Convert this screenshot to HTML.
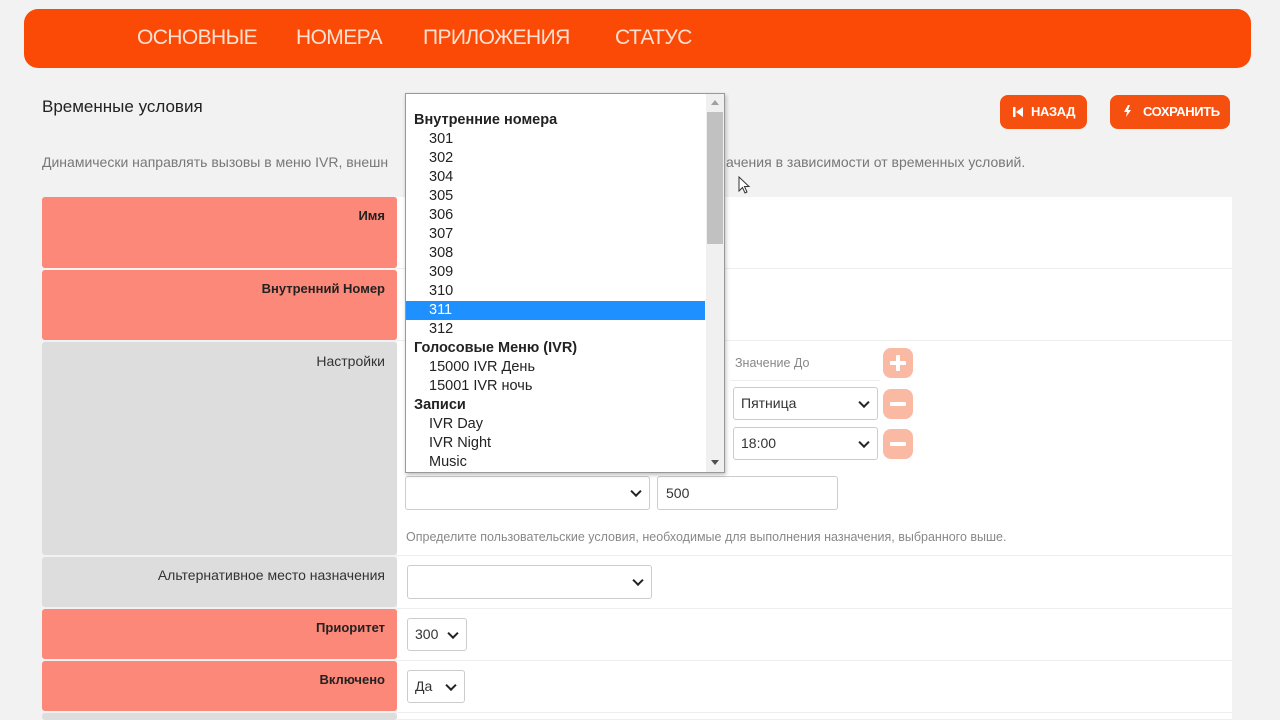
<!DOCTYPE html>
<html><head><meta charset="utf-8">
<style>
*{box-sizing:border-box;margin:0;padding:0}
html,body{width:1280px;height:720px;overflow:hidden}
body{background:#f2f2f2;font-family:"Liberation Sans",sans-serif;color:#333;position:relative}
.a{position:absolute}
.nav{left:24px;top:9px;width:1227px;height:59px;background:#fa4a06;border-radius:14px}
.nav span{position:absolute;top:17px;color:#ffe0d2;font-size:21px;letter-spacing:-0.6px}
.btn{background:#f5500f;border-radius:8px;color:#fff;font-weight:bold;font-size:13px;height:34px;line-height:34px;letter-spacing:-0.4px}
.lab{background:#fb8878;border-radius:3px;text-align:right;padding-right:12px;font-size:13px;font-weight:bold;color:#222;padding-top:12px}
.lab.g{background:#dddddd;font-weight:normal;color:#333;font-size:14px}
.row{background:#fff;border-bottom:1px solid #eee}
.sel,.inp{border:1px solid #ccc;border-radius:3px;background:#fff;font-size:14px;color:#333;padding-left:7px}
.sel:after{content:"";position:absolute;right:9px;top:50%;width:6px;height:6px;border-right:2px solid #222;border-bottom:2px solid #222;transform:translateY(-70%) rotate(45deg)}
.pm{width:30px;height:30px;border-radius:8px;background:#f9b9a3}
.pm:before{content:"";position:absolute;left:7px;top:13px;width:16px;height:4px;background:#fff;border-radius:1px}
.pm.p:after{content:"";position:absolute;left:13px;top:7px;width:4px;height:16px;background:#fff;border-radius:1px}
.dd{left:405px;top:93px;width:320px;height:380px;background:#fff;border:1px solid #999;box-shadow:1px 2px 4px rgba(0,0,0,.25);font-size:14.5px;color:#222;overflow:hidden}
.dd div{height:19px;line-height:19px;padding-left:23px;width:299px}
.dd div.h{padding-left:8px;font-weight:bold}
.dd div.s{background:#1e90ff;color:#fff}
</style></head><body>
<div class="a nav">
<span style="left:113px">ОСНОВНЫЕ</span>
<span style="left:272px">НОМЕРА</span>
<span style="left:399px">ПРИЛОЖЕНИЯ</span>
<span style="left:591px">СТАТУС</span>
</div>
<div class="a" style="left:42px;top:97px;font-size:17px;color:#222">Временные условия</div>
<div class="a btn" style="left:1000px;top:95px;width:87px;padding-left:13px"><svg width="10" height="10" style="vertical-align:-1px;margin-right:8px"><rect x="0" y="0" width="2.5" height="10" fill="#fff"/><path d="M10 0 L3 5 L10 10Z" fill="#fff"/></svg>НАЗАД</div>
<div class="a btn" style="left:1110px;top:95px;width:120px;padding-left:13px"><svg width="9" height="12" style="vertical-align:-1px;margin-right:11px"><path d="M5 0 L1 7 L4 7 L3 12 L8 5 L5 5 L7 0Z" fill="#fff"/></svg>СОХРАНИТЬ</div>
<div class="a" style="left:42px;top:154px;font-size:14px;color:#777;white-space:nowrap">Динамически направлять вызовы в меню IVR, внешн</div>
<div class="a" style="left:726px;top:154px;font-size:14px;color:#777;white-space:nowrap">ачения в зависимости от временных условий.</div>

<div class="a row" style="left:397px;top:197px;width:835px;height:72px"></div>
<div class="a row" style="left:397px;top:269px;width:835px;height:72px"></div>
<div class="a row" style="left:397px;top:341px;width:835px;height:215px"></div>
<div class="a row" style="left:397px;top:556px;width:835px;height:53px"></div>
<div class="a row" style="left:397px;top:609px;width:835px;height:52px"></div>
<div class="a row" style="left:397px;top:661px;width:835px;height:52px"></div>
<div class="a row" style="left:397px;top:713px;width:835px;height:7px"></div>

<div class="a lab" style="left:42px;top:197px;width:355px;height:71px;padding-top:11px">Имя</div>
<div class="a lab" style="left:42px;top:270px;width:355px;height:70px;padding-top:11px">Внутренний Номер</div>
<div class="a lab g" style="left:42px;top:342px;width:355px;height:213px;padding-top:11px">Настройки</div>
<div class="a lab g" style="left:42px;top:557px;width:355px;height:50px;padding-top:10px">Альтернативное место назначения</div>
<div class="a lab" style="left:42px;top:609px;width:355px;height:50px;padding-top:11px">Приоритет</div>
<div class="a lab" style="left:42px;top:661px;width:355px;height:50px;padding-top:11px">Включено</div>
<div class="a lab g" style="left:42px;top:713px;width:355px;height:7px;padding:0"></div>

<div class="a" style="left:735px;top:356px;font-size:12.5px;color:#888">Значение До</div>
<div class="a" style="left:730px;top:380px;width:150px;border-top:1px solid #eee"></div>
<div class="a pm p" style="left:883px;top:348px"></div>
<div class="a sel" style="left:733px;top:387px;width:145px;height:33px;line-height:31px">Пятница</div>
<div class="a pm" style="left:883px;top:389px"></div>
<div class="a sel" style="left:733px;top:427px;width:145px;height:33px;line-height:31px">18:00</div>
<div class="a pm" style="left:883px;top:429px"></div>
<div class="a sel" style="left:405px;top:476px;width:245px;height:34px"></div>
<div class="a inp" style="left:657px;top:476px;width:181px;height:34px;line-height:32px;padding-left:8px">500</div>
<div class="a" style="left:406px;top:530px;font-size:12.5px;color:#888;white-space:nowrap">Определите пользовательские условия, необходимые для выполнения назначения, выбранного выше.</div>
<div class="a sel" style="left:407px;top:565px;width:245px;height:34px"></div>
<div class="a sel" style="left:407px;top:618px;width:60px;height:33px;line-height:31px">300</div>
<div class="a sel" style="left:407px;top:670px;width:58px;height:33px;line-height:31px">Да</div>

<svg class="a" style="left:738px;top:176px" width="14" height="20"><path d="M1 1 L1 15 L4.5 11.5 L7 17 L9 16 L6.5 10.5 L11 10.5Z" fill="#fff" stroke="#333" stroke-width="1"/></svg>

<div class="a dd">
<div style="height:17px"></div>
<div class="h">Внутренние номера</div>
<div>301</div><div>302</div><div>304</div><div>305</div><div>306</div><div>307</div><div>308</div><div>309</div><div>310</div>
<div class="s">311</div><div>312</div>
<div class="h">Голосовые Меню (IVR)</div>
<div>15000 IVR День</div><div>15001 IVR ночь</div>
<div class="h">Записи</div>
<div>IVR Day</div><div>IVR Night</div><div>Music</div>
<div class="a" style="left:300px;top:0;width:18px;height:378px;background:#f0f0f0;padding:0"></div>
<div class="a" style="left:301px;top:18px;width:16px;height:132px;background:#c1c1c1;padding:0"></div>
<svg class="a" style="left:305px;top:6px" width="8" height="5"><path d="M0 5 L4 0 L8 5Z" fill="#a0a0a0"/></svg>
<svg class="a" style="left:305px;top:366px" width="8" height="5"><path d="M0 0 L4 5 L8 0Z" fill="#505050"/></svg>
</div>
</body></html>
